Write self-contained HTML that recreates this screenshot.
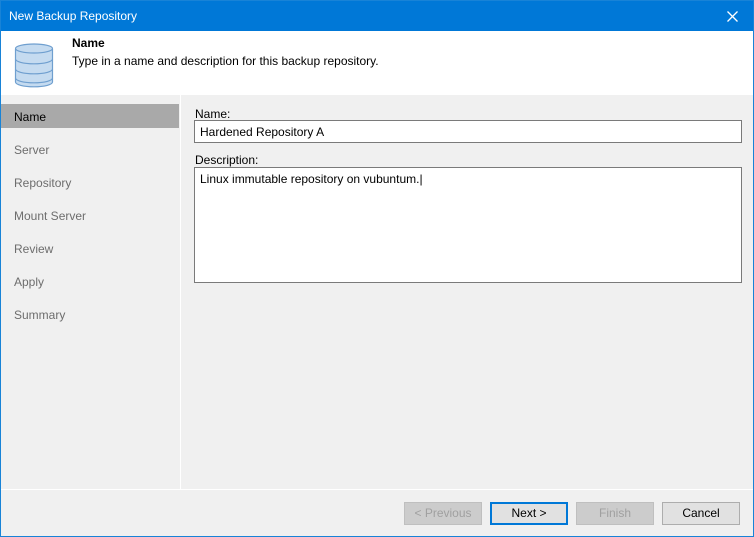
<!DOCTYPE html>
<html><head><style>
*{margin:0;padding:0;box-sizing:border-box}
body{width:754px;height:537px;overflow:hidden;font-family:"Liberation Sans",sans-serif;font-size:12px;color:#000;background:#f0f0f0}
.win{position:absolute;left:0;top:0;width:754px;height:537px;border:1px solid #1883d7;background:#f0f0f0}
.title{position:absolute;left:0;top:0;width:752px;height:30px;background:#0078d7;color:#fff;font-size:12px;padding:8px 0 0 8px}
.hdr{position:absolute;left:0;top:30px;width:752px;height:64px;background:#fff}
.left{position:absolute;left:0;top:94px;width:179px;height:394px;background:#f0f0f0}
.vl{position:absolute;left:179px;top:94px;width:1px;height:394px;background:#fff}
.hl{position:absolute;left:0;top:488px;width:752px;height:1px;background:#fff}
.item{position:absolute;left:13px;color:#6d6d6d}
.sel{position:absolute;left:0;top:103px;width:178px;height:24px;background:#a9a9a9}
.lbl{position:absolute;left:194px}
.inp{position:absolute;left:193px;background:#fff;border:1px solid #7a7a7a;padding:4px 5px}
.btn{position:absolute;top:501px;width:78px;height:23px;border:1px solid #adadad;background:#e1e1e1;text-align:center;line-height:21px}
.dis{color:#a0a0a0;background:#cccccc;border-color:#bfbfbf}
</style></head><body><div class="win">
<div class="title">New Backup Repository
<svg style="position:absolute;right:15px;top:10px" width="11" height="11" viewBox="0 0 11 11"><path d="M0.5 0.5L10.5 10.5M10.5 0.5L0.5 10.5" stroke="#fff" stroke-width="1.3"/></svg></div>
<div class="hdr">
<svg style="position:absolute;left:13px;top:12px" width="40" height="46" viewBox="0 0 40 46">
<g fill="#c5dbf0" stroke="#6f9fcf" stroke-width="1.2">
<path d="M1.5 6v33c0 2.7 8 4.8 18.5 4.8s18.5-2.1 18.5-4.8V6"/>
<ellipse cx="20" cy="5.5" rx="18.5" ry="4.5"/>
<path d="M1.5 16c0 2.7 8 4.8 18.5 4.8s18.5-2.1 18.5-4.8" fill="none"/>
<path d="M1.5 26c0 2.7 8 4.8 18.5 4.8s18.5-2.1 18.5-4.8" fill="none"/>
<path d="M1.5 35c0 2.7 8 4.8 18.5 4.8s18.5-2.1 18.5-4.8" fill="none"/>
</g></svg>
<div style="position:absolute;left:71px;top:5px;font-weight:bold">Name</div>
<div style="position:absolute;left:71px;top:23px">Type in a name and description for this backup repository.</div>
</div>
<div class="left"></div>
<div class="sel"></div>
<div class="item" style="top:109px;color:#000">Name</div>
<div class="item" style="top:142px">Server</div>
<div class="item" style="top:175px">Repository</div>
<div class="item" style="top:208px">Mount Server</div>
<div class="item" style="top:241px">Review</div>
<div class="item" style="top:274px">Apply</div>
<div class="item" style="top:307px">Summary</div>
<div class="vl"></div><div class="hl"></div>
<div class="lbl" style="top:106px">Name:</div>
<div class="inp" style="top:119px;width:548px;height:23px;padding-top:4px">Hardened Repository A</div>
<div class="lbl" style="top:152px">Description:</div>
<div class="inp" style="top:166px;width:548px;height:116px">Linux immutable repository on vubuntum.|</div>
<div class="btn dis" style="left:403px">&lt; Previous</div>
<div class="btn" style="left:489px;border:2px solid #0078d7;line-height:19px">Next &gt;</div>
<div class="btn dis" style="left:575px">Finish</div>
<div class="btn" style="left:661px">Cancel</div>
</div></body></html>
